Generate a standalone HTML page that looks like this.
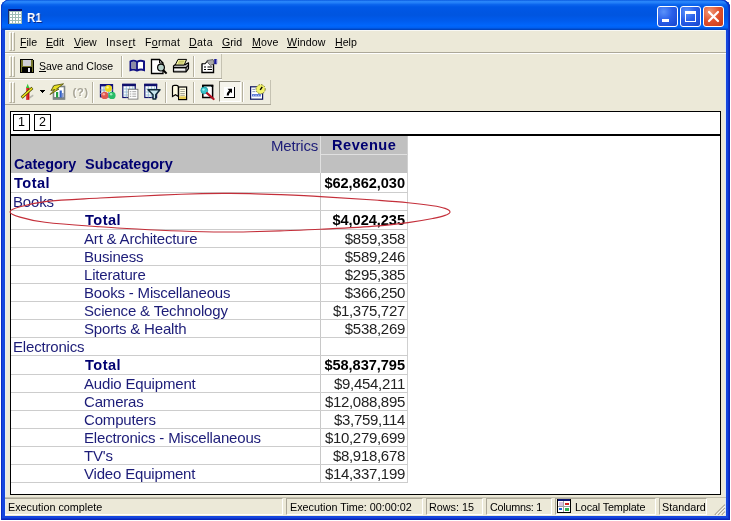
<!DOCTYPE html>
<html><head><meta charset="utf-8"><title>R1</title>
<style>
html,body{margin:0;padding:0;background:#fff;}
body{width:731px;height:521px;position:relative;overflow:hidden;font-family:"Liberation Sans",sans-serif;}
.a{position:absolute;}
.g,.menu,.st,.pg,#ttext{will-change:transform;}
#win{left:1px;top:0;width:729px;height:520px;background:#1546de;border-radius:8px 8px 0 0;box-shadow:inset 1px 0 0 #0a2cc4,inset -1px -1px 0 #0a24b8,inset -2px -2px 0 #0c34cc;}
#title{left:1px;top:0;width:729px;height:30px;border-radius:8px 8px 0 0;
 background:linear-gradient(180deg,#0553dc 0%,#2a86fa 4%,#2380f8 9%,#0c66ee 15%,#0058e6 23%,#0055e0 50%,#005cee 70%,#0066fc 85%,#0060f2 92%,#004ccc 97%,#003cb0 100%);box-shadow:inset -1px 0 0 #0a2cb8,inset -2px 0 0 #0c3cd0,inset 1px 0 0 #0a3cc8;}
#ttext{left:26.5px;top:9.6px;color:#fff;font-weight:bold;font-size:13px;line-height:16px;text-shadow:1px 1px 0 #0a2a8a;transform:scaleX(.88);transform-origin:0 0;}
#client{left:5px;top:30px;width:721px;height:486px;background:#ece9d8;box-shadow:inset 1px 0 0 #e4ecf4,inset -1px 0 0 #dde6f0,inset 0 1px 0 #f8f8f4;}
.tbtn{top:6px;width:21px;height:21px;border:1px solid #fff;border-radius:3px;box-sizing:border-box;
 background:radial-gradient(circle at 30% 25%,#5a92fa 0%,#2a60ea 45%,#1644cc 100%);}
#bclose{background:radial-gradient(circle at 30% 25%,#f09a78 0%,#e0502c 50%,#c43a18 100%);}
.menu{top:35px;font-size:10.6px;line-height:14px;color:#000;white-space:pre;}
.menu u{text-decoration:underline;}
.hl{height:1px;background:#aca899;}
.hw{height:1px;background:#fff;}
.grip{width:3px;border-left:1px solid #fff;border-top:1px solid #fff;border-right:1px solid #b5b19f;border-bottom:1px solid #b5b19f;box-sizing:border-box;background:#ece9d8;}
.sep{width:1px;background:#b5b19f;border-right:1px solid #fff;}
.tb{background:#efede0;border-right:1px solid #c5c2b2;box-sizing:border-box;}
#panel{left:10px;top:111px;width:711px;height:384px;background:#fff;border:1px solid #000;box-sizing:border-box;}
.pg{top:114px;width:17px;height:17px;border:1px solid #000;box-sizing:border-box;font-size:12.5px;line-height:15px;text-align:center;color:#000;background:#fff;}
.g{font-size:15px;letter-spacing:-0.18px;line-height:18px;white-space:pre;color:#1c1c78;}
.g.b{color:#000070;font-size:14.6px;letter-spacing:0;}
.g.v.b{color:#000;}
.b{font-weight:bold;}
.v{color:#222;text-align:right;width:84px;left:321px;letter-spacing:-0.3px;}
.g.v.b{letter-spacing:-0.05px;}
.rl{left:11px;width:397px;height:1px;background:#cdcdcd;}
.st{top:501px;font-size:10.8px;line-height:13px;color:#000;white-space:pre;}
.sp{top:498px;height:17px;border-top:1px solid #aca899;border-left:1px solid #aca899;border-right:1px solid #fff;border-bottom:1px solid #fff;box-sizing:border-box;}
</style></head><body>
<div class="a" id="win"></div>
<div class="a" id="title"></div>
<div class="a" id="client"></div>

<!-- title icon -->
<svg class="a" style="left:8px;top:9px" width="14" height="15" viewBox="0 0 14 15" shape-rendering="crispEdges">
<rect x="0" y="0" width="14" height="15" fill="#1a2a6a"/>
<rect x="1" y="0" width="13" height="2" fill="#00107a"/>
<rect x="1" y="2" width="13" height="13" fill="#9dbcb6"/>
<g fill="#fff"><rect x="2" y="3" width="2" height="2"/><rect x="5" y="3" width="2" height="2"/><rect x="8" y="3" width="2" height="2"/><rect x="11" y="3" width="2" height="2"/>
<rect x="2" y="6" width="2" height="2"/><rect x="5" y="6" width="2" height="2"/><rect x="8" y="6" width="2" height="2"/><rect x="11" y="6" width="2" height="2"/>
<rect x="2" y="9" width="2" height="2"/><rect x="5" y="9" width="2" height="2"/><rect x="8" y="9" width="2" height="2"/><rect x="11" y="9" width="2" height="2"/>
<rect x="2" y="12" width="2" height="2"/><rect x="5" y="12" width="2" height="2"/><rect x="8" y="12" width="2" height="2"/><rect x="11" y="12" width="2" height="2"/></g>
</svg>
<div class="a" id="ttext">R1</div>

<!-- caption buttons -->
<div class="a tbtn" style="left:657px"><div class="a" style="left:4px;top:12px;width:7px;height:3px;background:#fff"></div></div>
<div class="a tbtn" style="left:680px"><div class="a" style="left:4px;top:4px;width:11px;height:11px;box-sizing:border-box;border:1px solid #fff;border-top:3px solid #fff"></div></div>
<div class="a tbtn" id="bclose" style="left:703px"><svg class="a" style="left:0;top:0" width="19" height="19" viewBox="0 0 19 19"><path d="M5 5 L14 14 M14 5 L5 14" stroke="#fff" stroke-width="2.2" stroke-linecap="round"/></svg></div>

<!-- menu bar -->
<div class="a grip" style="left:9px;top:32px;height:19px"></div>
<div class="a grip" style="left:12px;top:32px;height:19px"></div>
<div class="a menu" style="left:20px"><u>F</u>ile</div>
<div class="a menu" style="left:46px"><u>E</u>dit</div>
<div class="a menu" style="left:74px"><u>V</u>iew</div>
<div class="a menu" style="left:106px;letter-spacing:0.6px">Inse<u>r</u>t</div>
<div class="a menu" style="left:145px;letter-spacing:0.25px">F<u>o</u>rmat</div>
<div class="a menu" style="left:189px;letter-spacing:0.4px"><u>D</u>ata</div>
<div class="a menu" style="left:222px"><u>G</u>rid</div>
<div class="a menu" style="left:251.5px;letter-spacing:0.2px"><u>M</u>ove</div>
<div class="a menu" style="left:287px;letter-spacing:0.15px"><u>W</u>indow</div>
<div class="a menu" style="left:335px"><u>H</u>elp</div>
<div class="a hl" style="left:5px;top:52px;width:721px"></div>
<div class="a hw" style="left:5px;top:53px;width:721px"></div>

<!-- toolbar 1 -->
<div class="a tb" style="left:5px;top:54px;width:217px;height:24px"></div>
<div class="a grip" style="left:9px;top:56px;height:21px"></div><div class="a grip" style="left:12px;top:56px;height:21px"></div>
<div class="a menu" style="left:38.5px;top:59px;font-size:10.5px"><u>S</u>ave and Close</div>
<div class="a sep" style="left:121px;top:56px;height:21px"></div>
<div class="a sep" style="left:193px;top:56px;height:21px"></div>
<div class="a hl" style="left:5px;top:78px;width:217px"></div>
<div class="a hw" style="left:5px;top:79px;width:217px"></div>

<!-- toolbar 2 -->
<div class="a tb" style="left:5px;top:80px;width:266px;height:24px"></div>
<div class="a grip" style="left:9px;top:82px;height:21px"></div><div class="a grip" style="left:12px;top:82px;height:21px"></div>
<div class="a sep" style="left:92px;top:82px;height:21px"></div>
<div class="a sep" style="left:165px;top:82px;height:21px"></div>
<div class="a sep" style="left:193px;top:82px;height:21px"></div>
<div class="a hl" style="left:5px;top:104px;width:266px"></div>

<!-- grid panel -->
<div class="a" id="panel"></div>
<div class="a pg" style="left:13px">1</div>
<div class="a pg" style="left:34px">2</div>
<div class="a" style="left:11px;top:134px;width:709px;height:2px;background:#000"></div>
<div class="a" style="left:11px;top:136px;width:397px;height:37px;background:#c0c0c0"></div>
<div class="a" style="left:320px;top:136px;width:1px;height:37px;background:#e0e0e0"></div>
<div class="a" style="left:321px;top:154px;width:86px;height:1px;background:#e0e0e0"></div>
<div class="a" style="left:407px;top:136px;width:1px;height:347px;background:#d0d0d0"></div>
<div class="a" style="left:320px;top:173px;width:1px;height:310px;background:#c8c8c8"></div>

<div class="a g" style="left:271px;top:136.6px">Metrics</div>
<div class="a g b" style="left:332px;top:136px;letter-spacing:0.5px">Revenue</div>
<div class="a g b" style="left:13.5px;top:155px;font-size:14.4px">Category</div>
<div class="a g b" style="left:84.5px;top:155px;font-size:14.5px">Subcategory</div>
<div class="a g b" style="left:13.8px;top:174px;letter-spacing:0.45px">Total</div>
<div class="a g v b" style="top:174px">$62,862,030</div>
<div class="a rl" style="top:192px"></div>
<div class="a g" style="left:13px;top:192.7px">Books</div>
<div class="a rl" style="top:210px"></div>
<div class="a g b" style="left:84.8px;top:211px;letter-spacing:0.45px">Total</div>
<div class="a g v b" style="top:211px">$4,024,235</div>
<div class="a rl" style="top:229px"></div>
<div class="a g" style="left:84px;top:229.7px">Art &amp; Architecture</div>
<div class="a g v" style="top:229.7px">$859,358</div>
<div class="a rl" style="top:247px"></div>
<div class="a g" style="left:84px;top:247.7px">Business</div>
<div class="a g v" style="top:247.7px">$589,246</div>
<div class="a rl" style="top:265px"></div>
<div class="a g" style="left:84px;top:265.7px">Literature</div>
<div class="a g v" style="top:265.7px">$295,385</div>
<div class="a rl" style="top:283px"></div>
<div class="a g" style="left:84px;top:283.7px">Books - Miscellaneous</div>
<div class="a g v" style="top:283.7px">$366,250</div>
<div class="a rl" style="top:301px"></div>
<div class="a g" style="left:84px;top:301.7px">Science &amp; Technology</div>
<div class="a g v" style="top:301.7px">$1,375,727</div>
<div class="a rl" style="top:319px"></div>
<div class="a g" style="left:84px;top:319.7px">Sports &amp; Health</div>
<div class="a g v" style="top:319.7px">$538,269</div>
<div class="a rl" style="top:337px"></div>
<div class="a g" style="left:13px;top:337.7px">Electronics</div>
<div class="a rl" style="top:355px"></div>
<div class="a g b" style="left:84.8px;top:356px;letter-spacing:0.45px">Total</div>
<div class="a g v b" style="top:356px">$58,837,795</div>
<div class="a rl" style="top:374px"></div>
<div class="a g" style="left:84px;top:374.7px">Audio Equipment</div>
<div class="a g v" style="top:374.7px">$9,454,211</div>
<div class="a rl" style="top:392px"></div>
<div class="a g" style="left:84px;top:392.7px">Cameras</div>
<div class="a g v" style="top:392.7px">$12,088,895</div>
<div class="a rl" style="top:410px"></div>
<div class="a g" style="left:84px;top:410.7px">Computers</div>
<div class="a g v" style="top:410.7px">$3,759,114</div>
<div class="a rl" style="top:428px"></div>
<div class="a g" style="left:84px;top:428.7px">Electronics - Miscellaneous</div>
<div class="a g v" style="top:428.7px">$10,279,699</div>
<div class="a rl" style="top:446px"></div>
<div class="a g" style="left:84px;top:446.7px">TV's</div>
<div class="a g v" style="top:446.7px">$8,918,678</div>
<div class="a rl" style="top:464px"></div>
<div class="a g" style="left:84px;top:464.7px">Video Equipment</div>
<div class="a g v" style="top:464.7px">$14,337,199</div>
<div class="a rl" style="top:482px"></div>
<!-- save icon -->
<svg class="a" style="left:20px;top:59px" width="14" height="14" viewBox="0 0 14 14" shape-rendering="crispEdges">
<rect x="0" y="0" width="14" height="14" fill="#000"/>
<rect x="1" y="1" width="12" height="12" fill="#76762c"/>
<rect x="3" y="1" width="8" height="6" fill="#cfcfd6"/>
<rect x="2" y="8" width="10" height="5" fill="#000"/>
<rect x="8" y="9" width="2" height="4" fill="#e8e8f0"/>
<rect x="13" y="0" width="1" height="1" fill="#ece9d8"/>
</svg>
<!-- book icon -->
<svg class="a" style="left:129px;top:59px" width="17" height="14" viewBox="0 0 17 14">
<path d="M1.5 2.5 Q4.5 1 8 2.8 Q11.5 1 15 2.5 L15 11 Q11.5 9.8 8 11.5 Q4.5 9.8 1.5 11 Z" fill="#fff" stroke="#101084" stroke-width="2"/>
<path d="M2.5 3 Q5 2 7.6 3.4 L7.6 10.4 Q5 9.4 2.5 10 Z" fill="#8c8ca4"/>
<path d="M8 2.8 L8 11.5" stroke="#101084" stroke-width="1.8"/>
</svg>
<!-- print preview -->
<svg class="a" style="left:150px;top:58px" width="18" height="17" viewBox="0 0 18 17">
<path d="M1.5 1.5 L9.5 1.5 L13 5 L13 15.5 L1.5 15.5 Z" fill="#fff" stroke="#000" stroke-width="1.3"/>
<path d="M9.5 1.5 L9.5 5 L13 5" fill="none" stroke="#000" stroke-width="1"/>
<circle cx="11" cy="9.6" r="3.4" fill="#b9d3cc" stroke="#000" stroke-width="1.2"/>
<path d="M13.4 12.2 L16.6 15.6" stroke="#000" stroke-width="2"/>
</svg>
<!-- printer -->
<svg class="a" style="left:172px;top:58px" width="18" height="16" viewBox="0 0 18 16">
<path d="M1.5 8 L3.5 6.6 L13 6.6 L16.5 4.8 L16.5 10.6 L14 13.8 L1.5 13.8 Z" fill="#b8b8b8" stroke="#000" stroke-width="1.2" stroke-linejoin="round"/>
<path d="M6 1.4 L14.6 1.4 L12.2 7 L3.2 7 Z" fill="#f6f6a4" stroke="#000" stroke-width="1"/>
<path d="M6.8 3.2 L12.4 3.2 M6 5 L11.6 5" stroke="#a8a848" stroke-width="0.9"/>
<path d="M1.5 9.6 L14 9.6 L16.5 7.2" fill="none" stroke="#000" stroke-width="1.1"/>
<path d="M2.4 11.6 L13.4 11.6" stroke="#f8f8f8" stroke-width="1.3"/>
<path d="M14 9.6 L14 13.8" stroke="#000" stroke-width="1"/>
</svg>
<!-- properties -->
<svg class="a" style="left:201px;top:58px" width="18" height="16" viewBox="0 0 18 16">
<path d="M1 5.5 L1 14.5 L12.5 14.5 L12.5 5.5" fill="#fff" stroke="#000" stroke-width="1.4"/>
<path d="M1 5.8 L4 5.8 L7 2.5 L10 6 L12.5 5.8" fill="#fff" stroke="#000" stroke-width="1.1"/>
<path d="M6 2.5 L12 1.5 L13.5 5.5 L9.5 7.5 L7 5 Z" fill="#a8a8a8" stroke="#555" stroke-width="0.8"/>
<rect x="13.2" y="1" width="2.6" height="5.2" fill="#1c1c9c"/>
<rect x="15.6" y="1.5" width="1.2" height="4" fill="#c8c8e8"/>
<path d="M3 9 L5 9 M6.5 9 L11 9 M3 11.5 L5 11.5 M6.5 11.5 L11 11.5" stroke="#000" stroke-width="1.2"/>
</svg>

<!-- toolbar 2 -->
<!-- pencil/ruler -->
<svg class="a" style="left:20px;top:83px" width="16" height="18" viewBox="0 0 16 18">
<path d="M9 14 L13 11.5 L13.5 13 L10 15.5 Z" fill="#b8b8b0"/>
<rect x="6" y="4.5" width="3.4" height="12.3" fill="#cc1010"/>
<rect x="6.3" y="4.5" width="1" height="12.3" fill="#f06060"/>
<path d="M6 5 L7.7 0.8 L9.4 5 Z" fill="#38c838"/>
<path d="M1.6 14.6 L12.4 4.9" stroke="#4a4a00" stroke-width="2.8"/>
<path d="M2 14.2 L12 5.2" stroke="#f4e820" stroke-width="1.5"/>
</svg>
<svg class="a" style="left:40px;top:90px" width="5" height="3" viewBox="0 0 5 3" shape-rendering="crispEdges"><rect x="0" y="0" width="5" height="1"/><rect x="1" y="1" width="3" height="1"/><rect x="2" y="2" width="1" height="1"/></svg>
<!-- chart w/ lightning -->
<svg class="a" style="left:49px;top:83px" width="17" height="17" viewBox="0 0 17 17">
<rect x="4.5" y="3.5" width="11" height="12.5" fill="#fff" stroke="#7c8484" stroke-width="1.6"/>
<rect x="4" y="14" width="12" height="2.4" fill="#7c8484"/>
<rect x="7" y="9" width="2.2" height="5.5" fill="#20a040"/>
<rect x="10.6" y="7.5" width="2.2" height="7" fill="#3060c8"/>
<rect x="13" y="10" width="1.6" height="4.5" fill="#8898c8"/>
<path d="M14.5 0.8 L5 2.5 L2 7.5 L6 6.5 L1 11.5 L10 6 L7.5 6 Z" fill="#e8e020" stroke="#585810" stroke-width="0.9"/>
</svg>
<!-- (?) disabled -->
<svg class="a" style="left:71px;top:83px;will-change:transform" width="20" height="16" viewBox="0 0 20 16">
<g font-family="Liberation Sans, sans-serif" font-weight="bold" font-size="11.5" letter-spacing="0.5">
<text x="2.4" y="13.6" fill="#fff">(?)</text>
<text x="1.4" y="12.6" fill="#a9a698">(?)</text>
</g>
</svg>
<!-- balls -->
<svg class="a" style="left:99px;top:83px" width="17" height="18" viewBox="0 0 17 18">
<rect x="1.5" y="1.8" width="12" height="12" fill="#e8eef4" stroke="#10107c" stroke-width="1.3"/>
<rect x="1" y="1" width="13" height="2.4" fill="#10107c"/>
<path d="M5 3 L5 14 M9.5 3 L9.5 14 M1 7 L14 7 M1 10.5 L14 10.5" stroke="#7aa0c0" stroke-width="0.8"/>
<circle cx="9.4" cy="5.4" r="3.4" fill="#ecd818"/><circle cx="8.6" cy="4.4" r="1.2" fill="#fff68a"/>
<circle cx="5.7" cy="12.4" r="3.6" fill="#e05850"/><circle cx="4.8" cy="11.3" r="1.3" fill="#f8a8a0"/>
<circle cx="13" cy="12.4" r="3.6" fill="#28bc68"/><circle cx="12.1" cy="11.3" r="1.3" fill="#98ecb8"/>
</svg>
<!-- table+doc -->
<svg class="a" style="left:122px;top:83px" width="17" height="17" viewBox="0 0 17 17">
<rect x="0.8" y="1.5" width="12.4" height="13" fill="#fff" stroke="#10106c" stroke-width="1.2"/>
<rect x="0.2" y="0.7" width="13.6" height="2.5" fill="#10106c"/>
<path d="M4.3 3 L4.3 14.5 M7.6 3 L7.6 14.5 M10.8 3 L10.8 14.5 M1 6 L13 6 M1 9 L13 9 M1 12 L13 12" stroke="#7fb0cc" stroke-width="0.7"/>
<rect x="6.3" y="6.3" width="9.6" height="9.8" fill="#fff" stroke="#787878" stroke-width="0.9"/>
<path d="M7.8 8.7 L9.3 8.7 M10.3 8.7 L14.2 8.7 M7.8 11 L9.3 11 M10.3 11 L14.2 11 M7.8 13.3 L9.3 13.3 M10.3 13.3 L14.2 13.3" stroke="#9a9a9a" stroke-width="0.9"/>
</svg>
<!-- filter -->
<svg class="a" style="left:144px;top:83px" width="17" height="17" viewBox="0 0 17 17">
<rect x="0.8" y="1.5" width="11.8" height="13" fill="#fff" stroke="#10106c" stroke-width="1.2"/>
<rect x="0.2" y="0.7" width="13" height="2.5" fill="#10106c"/>
<path d="M4.3 3 L4.3 14.5 M7.6 3 L7.6 14.5 M10.6 3 L10.6 14.5 M1 6 L12.5 6 M1 9 L12.5 9 M1 12 L12.5 12" stroke="#7fb0cc" stroke-width="0.7"/>
<path d="M4 6.8 L16 6.8 L11.8 11.8 L11.8 16 L9 16 L9 11.8 Z" fill="#c8e8f0" stroke="#102838" stroke-width="1.5" stroke-linejoin="round"/>
</svg>
<!-- page icon -->
<svg class="a" style="left:171px;top:84px" width="17" height="17" viewBox="0 0 17 17">
<path d="M1.5 3 Q1.5 1.3 3.5 1.3 L5.5 1.3 Q7.3 1.3 7.3 3 L7.3 12.5 L4.5 10.8 L1.5 12.5 Z" fill="#fffce4" stroke="#000" stroke-width="1.2"/>
<rect x="7.6" y="3" width="8" height="12.6" fill="#fffce4" stroke="#000" stroke-width="1.2"/>
<rect x="8.2" y="12.4" width="6.8" height="2.6" fill="#e8cc50"/>
<path d="M9.3 5.5 L13.8 5.5 M9.3 7.5 L13.8 7.5 M9.3 9.5 L13.8 9.5 M9.3 11.3 L13.8 11.3" stroke="#9a9a8a" stroke-width="0.9"/>
</svg>
<!-- magnifier window -->
<svg class="a" style="left:199px;top:84px" width="17" height="17" viewBox="0 0 17 17">
<rect x="3.8" y="1.5" width="9.8" height="12" fill="#fff" stroke="#000" stroke-width="1.5"/>
<rect x="3.2" y="0.8" width="11" height="2" fill="#000"/>
<rect x="5" y="2" width="7" height="0.8" fill="#8aa"/>
<circle cx="5.3" cy="6.4" r="3.4" fill="#38c4cc" stroke="#189098" stroke-width="0.8"/>
<circle cx="4.5" cy="5.6" r="1.2" fill="#a0f0f0"/>
<path d="M8 9.2 L14.6 15" stroke="#b01020" stroke-width="2.2" stroke-linecap="round"/>
</svg>
<!-- pressed button -->
<div class="a sep" style="left:242px;top:82px;height:20px"></div>
<div class="a" style="left:219px;top:81px;width:22px;height:21px;box-sizing:border-box;background:#f5f4ec;border-top:1px solid #8c8a7c;border-left:1px solid #8c8a7c;border-right:1px solid #fff;border-bottom:1px solid #fff"></div>
<svg class="a" style="left:224px;top:87px" width="12" height="12" viewBox="0 0 12 12">
<rect x="0" y="0" width="11" height="11" fill="#000"/>
<rect x="0" y="0" width="10" height="10" fill="#fff"/>
<path d="M3.6 1.8 L8 1.8 L8 6.2 L6.7 4.9 Q4.8 6.2 4.8 8.6 L2.7 8.6 Q2.7 5.2 5.1 3.4 Z" fill="#000"/>
</svg>
<!-- clock doc -->
<svg class="a" style="left:249px;top:83px" width="18" height="18" viewBox="0 0 18 18">
<rect x="1.6" y="3.8" width="12" height="12.4" fill="#fff" stroke="#0c1460" stroke-width="1.2"/>
<rect x="3" y="11.2" width="9" height="2.2" fill="#4464d0"/>
<path d="M3.8 12.5 L11.8 12.5" stroke="#c0ccf4" stroke-width="0.8" stroke-dasharray="1.5 1"/>
<path d="M3.4 6.4 L6 6.4 M3.4 8.6 L6.4 8.6" stroke="#8090b0" stroke-width="0.9"/>
<circle cx="11.6" cy="6.2" r="4.6" fill="#f4f46c" stroke="#6a6a28" stroke-width="0.9" stroke-dasharray="1.6 1.1"/>
<path d="M11.2 6.8 L13.2 3.8" stroke="#000" stroke-width="1.4"/>
</svg>
<!-- status icon -->
<svg class="a" style="left:557px;top:498px" width="14" height="15" viewBox="0 0 14 15" shape-rendering="crispEdges">
<rect x="0" y="0" width="14" height="15" fill="#000"/>
<rect x="1" y="3" width="12" height="11" fill="#fff"/>
<rect x="1" y="1" width="12" height="2" fill="#0c1470"/>
<rect x="2" y="4" width="4" height="4" fill="#d8c0e0"/>
<rect x="8" y="5" width="4" height="2" fill="#d02020"/>
<rect x="6" y="3" width="1" height="11" fill="#a0a0a0"/>
<rect x="1" y="8" width="12" height="1" fill="#a0a0a0"/>
<rect x="2" y="10" width="3" height="2" fill="#2060d0"/>
<rect x="8" y="10" width="4" height="3" fill="#30b050"/>
</svg>

<div class="a hl" style="left:5px;top:497px;width:721px;background:#c5c2b2"></div>
<div class="a sp" style="left:5px;width:278px;border-left:none"></div>
<div class="a sp" style="left:286px;width:137px"></div>
<div class="a sp" style="left:426px;width:57px"></div>
<div class="a sp" style="left:486px;width:66px"></div>
<div class="a sp" style="left:555px;width:101px"></div>
<div class="a sp" style="left:659px;width:48px"></div>
<div class="a st" style="left:8px">Execution complete</div>
<div class="a st" style="left:289.5px">Execution Time: 00:00:02</div>
<div class="a st" style="left:428.5px">Rows: 15</div>
<div class="a st" style="left:490px;letter-spacing:-0.25px">Columns: 1</div>
<div class="a st" style="left:574.5px;letter-spacing:-0.15px">Local Template</div>
<div class="a st" style="left:662px">Standard</div>
<svg class="a" style="left:711px;top:502px" width="15" height="14" viewBox="0 0 15 14">
<path d="M3.8 12.8 L14 2.6 M7.3 12.8 L14 6.1 M10.8 12.8 L14 9.6" stroke="#a6a291" stroke-width="1.2"/>
<path d="M4.9 12.9 L14 3.8 M8.4 12.9 L14 7.3 M11.9 12.9 L14 10.8" stroke="#fff" stroke-width="0.9"/>
</svg>

<svg class="a" style="left:0;top:185px" width="470" height="55" viewBox="0 185 470 55"><path d="M10 211.9 C10.0 210.2 16.4 207.8 20 206.8 C28.1 204.4 36.6 202.5 45 201.6 C63.2 199.6 81.7 199.1 100 198.0 C112.3 197.3 124.7 196.8 137 196.2 C151.7 195.5 166.3 194.8 181 194.3 C195.0 193.8 209.0 193.5 223 193.4 C232.0 193.3 241.0 193.4 250 193.6 C260.0 193.8 270.0 194.2 280 194.6 C293.5 195.2 307.1 195.8 320.6 196.6 C339.9 197.7 359.2 199.0 378.5 200.3 C388.3 201.0 398.2 201.7 408 202.7 C416.3 203.5 424.5 204.4 432.7 205.7 C436.8 206.3 441.1 207.0 445 208.4 C446.9 209.1 450.0 210.7 450 211.9 C450.0 213.1 446.9 214.7 445 215.4 C441.1 216.9 436.8 217.7 432.7 218.5 C424.5 220.1 416.3 221.5 408 222.6 C398.2 223.9 388.4 225.1 378.5 225.9 C359.2 227.4 339.9 228.3 320.6 229.3 C307.1 230.0 293.5 230.4 280 230.9 C270.0 231.2 260.0 231.5 250 231.7 C241.0 231.9 232.0 232.1 223 232 C209.0 231.9 195.0 231.5 181 231 C166.3 230.5 151.7 229.8 137 229 C124.7 228.4 112.3 227.7 100 226.8 C81.7 225.5 63.2 224.5 45 222.3 C36.6 221.3 28.1 219.5 20 217.1 C16.4 216.0 10.0 213.6 10 211.9Z" fill="none" stroke="#c42f3a" stroke-width="1.15"/></svg>

</body></html>
